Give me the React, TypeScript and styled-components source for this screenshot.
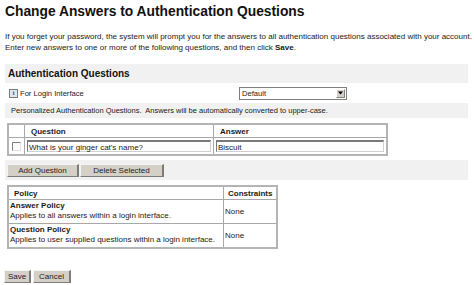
import styled, { createGlobalStyle } from 'styled-components';

const GlobalStyle = createGlobalStyle`
    body {
        margin: 0;
        background: #fff;
        font-family: 'Liberation Sans', Arial, sans-serif;
        color: #1a1a1a;
    }
`;

const Page = styled.div`
    display: flex;
    flex-direction: column;
    padding: 3px 6px 0 5px;
    width: 463px;
`;

const Title = styled.h1`
    margin: 0;
    font-size: 13.8px;
    line-height: 18px;
    font-weight: bold;
    color: #111;
`;

const Intro = styled.p`
    margin: 10px 0 0 0;
    font-size: 8px;
    line-height: 11px;
    white-space: nowrap;
`;

const Band = styled.div`
    display: flex;
    align-items: center;
    background: #f1f1f1;
    height: ${props => props.h || 15}px;
    padding-left: ${props => props.pad || 6}px;
    margin-top: ${props => props.mt || 0}px;
`;

const SectionTitle = styled.h2`
    margin: 0;
    font-size: 10px;
    font-weight: bold;
    color: #111;
`;

const BandText = styled.span`
    font-size: 7.5px;
`;

const LoginRow = styled.div`
    display: flex;
    align-items: center;
    height: 16px;
    margin-top: 2px;
    padding-left: 4px;
    font-size: 7.6px;
`;

const InfoIcon = styled.span`
    display: inline-flex;
    align-items: center;
    justify-content: center;
    width: 7px;
    height: 7px;
    border: 1px solid #7a7a7a;
    background: #dfe6f0;
    color: #24407a;
    font-size: 6px;
    font-weight: bold;
    font-family: 'Liberation Serif', serif;
    margin-right: 2px;
`;

const LoginLabel = styled.span`
    width: 219px;
`;

const Select = styled.div`
    display: flex;
    align-items: center;
    width: 104px;
    height: 11px;
    border: 1px solid #7f7f7f;
    background: #fff;
    font-size: 7.6px;
    padding-left: 2px;
`;

const SelectValue = styled.span`
    flex: 1;
`;

const SelectArrow = styled.span`
    display: flex;
    align-items: center;
    justify-content: center;
    width: 9px;
    height: 9px;
    background: #d4d0c8;
    border-top: 1px solid #fff;
    border-left: 1px solid #fff;
    border-right: 1px solid #808080;
    border-bottom: 1px solid #808080;
    margin-right: 1px;
    box-sizing: border-box;
`;

const Table = styled.table`
    border-collapse: collapse;
    margin: ${props => props.mt || 5}px 0 0 2px;
    width: ${props => props.w}px;
    border: 2px solid #b4b4b4;
    font-size: 8px;
`;

const Th = styled.th`
    border: 1px solid #a8a8a8;
    text-align: left;
    font-weight: bold;
    height: 12px;
    padding: 0 0 0 ${props => props.pl ?? 6}px;
    width: ${props => (props.w ? `${props.w}px` : 'auto')};
`;

const Td = styled.td`
    border: 1px solid #a8a8a8;
    padding: ${props => props.pad || '1px 2px'};
    vertical-align: middle;
    line-height: 10px;
    white-space: nowrap;
`;

const Check = styled.span`
    display: block;
    width: 7px;
    height: 7px;
    margin: 0 auto;
    border-top: 1px solid #808080;
    border-left: 1px solid #808080;
    border-right: 1px solid #e0e0e0;
    border-bottom: 1px solid #e0e0e0;
    background: #fff;
`;

const TextBox = styled.div`
    height: 12px;
    border-top: 2px solid #7a7a7a;
    border-left: 1px solid #7a7a7a;
    border-right: 1px solid #d0d0d0;
    border-bottom: 1px solid #d0d0d0;
    background: #fff;
    font-size: 8px;
    line-height: 11px;
    padding-left: 1px;
    box-sizing: border-box;
`;

const ButtonRow = styled.div`
    display: flex;
    gap: 1px;
`;

const Button = styled.button`
    font-family: 'Liberation Sans', Arial, sans-serif;
    font-size: 8px;
    color: #222;
    background: #d4d0c8;
    height: 13px;
    width: ${props => props.w}px;
    padding: 0;
    border-top: 1px solid #f4f4f4;
    border-left: 1px solid #f4f4f4;
    border-right: 2px solid #7c7c7c;
    border-bottom: 1px solid #7c7c7c;
    box-sizing: border-box;
`;

const PolicyName = styled.div`
    font-weight: bold;
`;

const Footer = styled.div`
    display: flex;
    gap: 2px;
    margin: 21px 0 0 -1px;
`;

const App: React.FC = () => {
    return (
        <>
            <GlobalStyle />
            <Page>
                <Title>Change Answers to Authentication Questions</Title>
                <Intro>
                    If you forget your password, the system will prompt you for the answers to all
                    authentication questions associated with your account.
                    <br />
                    Enter new answers to one or more of the following questions, and then click{' '}
                    <b>Save</b>.
                </Intro>

                <Band h={19} pad={3} mt={11}>
                    <SectionTitle>Authentication Questions</SectionTitle>
                </Band>

                <LoginRow>
                    <InfoIcon>i</InfoIcon>
                    <LoginLabel>For Login Interface</LoginLabel>
                    <Select>
                        <SelectValue>Default</SelectValue>
                        <SelectArrow>
                            <svg width='5' height='4' viewBox='0 0 5 4'>
                                <path d='M0 0.5h5L2.5 3.5z' fill='#000' />
                            </svg>
                        </SelectArrow>
                    </Select>
                </LoginRow>

                <Band h={15} mt={2}>
                    <BandText>
                        Personalized Authentication Questions.&nbsp; Answers will be automatically
                        converted to upper-case.
                    </BandText>
                </Band>

                <Table w={381}>
                    <thead>
                        <tr>
                            <Th w={15} pl={0}></Th>
                            <Th w={182}>Question</Th>
                            <Th>Answer</Th>
                        </tr>
                    </thead>
                    <tbody>
                        <tr>
                            <Td>
                                <Check />
                            </Td>
                            <Td pad='2px 2px'>
                                <TextBox>What is your ginger cat's name?</TextBox>
                            </Td>
                            <Td pad='2px 2px'>
                                <TextBox>Biscuit</TextBox>
                            </Td>
                        </tr>
                    </tbody>
                </Table>

                <Band h={20} pad={2} mt={4}>
                    <ButtonRow>
                        <Button w={72}>Add Question</Button>
                        <Button w={84}>Delete Selected</Button>
                    </ButtonRow>
                </Band>

                <Table w={271} mt={5}>
                    <thead>
                        <tr>
                            <Th pl={5}>Policy</Th>
                            <Th w={48} pl={4}>Constraints</Th>
                        </tr>
                    </thead>
                    <tbody>
                        <tr>
                            <Td pad='1px 1px 2px'>
                                <PolicyName>Answer Policy</PolicyName>
                                Applies to all answers within a login interface.
                            </Td>
                            <Td pad='1px 1px'>None</Td>
                        </tr>
                        <tr>
                            <Td pad='1px 1px 2px'>
                                <PolicyName>Question Policy</PolicyName>
                                Applies to user supplied questions within a login interface.
                            </Td>
                            <Td pad='1px 1px'>None</Td>
                        </tr>
                    </tbody>
                </Table>

                <Footer>
                    <Button w={27}>Save</Button>
                    <Button w={38}>Cancel</Button>
                </Footer>
            </Page>
        </>
    );
};

export default App;
